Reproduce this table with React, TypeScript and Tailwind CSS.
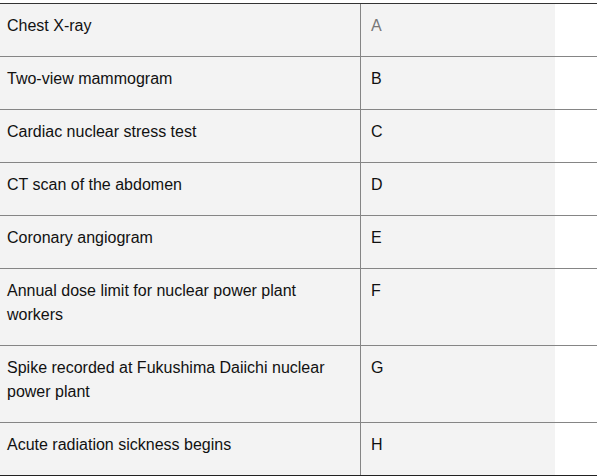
const rows: { label: string; code: string; muted?: boolean }[] = [
  { label: "Chest X-ray", code: "A", muted: true },
  { label: "Two-view mammogram", code: "B" },
  { label: "Cardiac nuclear stress test", code: "C" },
  { label: "CT scan of the abdomen", code: "D" },
  { label: "Coronary angiogram", code: "E" },
  { label: "Annual dose limit for nuclear power plant workers", code: "F" },
  { label: "Spike recorded at Fukushima Daiichi nuclear power plant", code: "G" },
  { label: "Acute radiation sickness begins", code: "H" },
];

export default function App() {
  return (
    <div className="w-[597px] h-[476px] bg-white pt-[3px] font-['Liberation_Sans',Arial,sans-serif] text-[16px] leading-[24px] text-[#111]">
      <div className="border-t border-[#333]">
        {rows.map((row, i) => (
          <div
            key={row.code}
            className={
              i === rows.length - 1
                ? "flex border-b border-[#222]"
                : "flex border-b border-[#858585]"
            }
          >
            <div className="w-[361px] shrink-0 bg-[#f3f3f3] border-r border-[#858585] pl-[7px] pr-[12px] pt-[10px] pb-[18px]">
              {row.label}
            </div>
            <div
              className={
                row.muted
                  ? "w-[194px] shrink-0 bg-[#f3f3f3] pl-[10px] pt-[10px] pb-[18px] text-[#777]"
                  : "w-[194px] shrink-0 bg-[#f3f3f3] pl-[10px] pt-[10px] pb-[18px]"
              }
            >
              {row.code}
            </div>
          </div>
        ))}
      </div>
    </div>
  );
}
